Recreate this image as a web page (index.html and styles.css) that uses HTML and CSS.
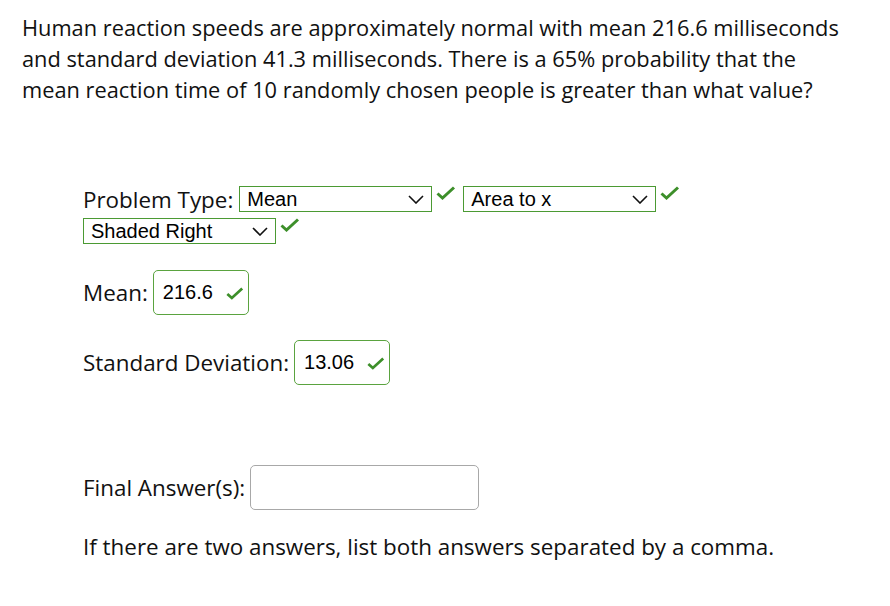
FILE: index.html
```html
<!DOCTYPE html>
<html>
<head>
<meta charset="utf-8">
<link rel="stylesheet" href="styles.css">
</head>
<body>
<div class="page">
  <p class="question">Human reaction speeds are approximately normal with mean 216.6 milliseconds and standard deviation 41.3 milliseconds. There is a 65% probability that the mean reaction time of 10 randomly chosen people is greater than what value?</p>

  <div class="form">
    <div class="row row-type">
      <span class="label">Problem Type:</span>
      <span class="sel sel-wide">
        <select><option>Mean</option></select>
        <svg class="chev" width="16" height="9" viewBox="0 0 16 9"><path d="M1 1 L8 8 L15 1" fill="none" stroke="#111" stroke-width="1.6"/></svg>
      </span>
      <svg class="check" width="20" height="14" viewBox="0 0 20 14"><path d="M1.5 7.5 L6.5 12 L18 1.5" fill="none" stroke="#3d8f2a" stroke-width="3"/></svg>
      <span class="sel sel-wide sel-second">
        <select><option>Area to x</option></select>
        <svg class="chev" width="16" height="9" viewBox="0 0 16 9"><path d="M1 1 L8 8 L15 1" fill="none" stroke="#111" stroke-width="1.6"/></svg>
      </span>
      <svg class="check" width="20" height="14" viewBox="0 0 20 14"><path d="M1.5 7.5 L6.5 12 L18 1.5" fill="none" stroke="#3d8f2a" stroke-width="3"/></svg>
    </div>
    <div class="row row-shade">
      <span class="sel sel-shade">
        <select><option>Shaded Right</option></select>
        <svg class="chev" width="16" height="9" viewBox="0 0 16 9"><path d="M1 1 L8 8 L15 1" fill="none" stroke="#111" stroke-width="1.6"/></svg>
      </span>
      <svg class="check" width="20" height="14" viewBox="0 0 20 14"><path d="M1.5 7.5 L6.5 12 L18 1.5" fill="none" stroke="#3d8f2a" stroke-width="3"/></svg>
    </div>

    <div class="row row-field row-mean">
      <span class="label">Mean:</span>
      <span class="field correct">
        <span class="val">216.6</span>
        <svg class="check-in" width="18" height="13" viewBox="0 0 20 14"><path d="M1.5 7.5 L6.5 12 L18 1.5" fill="none" stroke="#3d8f2a" stroke-width="3"/></svg>
      </span>
    </div>

    <div class="row row-field row-sd">
      <span class="label">Standard Deviation:</span>
      <span class="field correct">
        <span class="val">13.06</span>
        <svg class="check-in" width="18" height="13" viewBox="0 0 20 14"><path d="M1.5 7.5 L6.5 12 L18 1.5" fill="none" stroke="#3d8f2a" stroke-width="3"/></svg>
      </span>
    </div>

    <div class="row row-field row-final">
      <span class="label">Final Answer(s):</span>
      <span class="field blank"></span>
    </div>

    <p class="note">If there are two answers, list both answers separated by a comma.</p>
  </div>
</div>
</body>
</html>
```

FILE: styles.css
```css
html, body {
  margin: 0;
  padding: 0;
  background: #fff;
}
.page {
  padding: 12px 0 0 22px;
  font-family: "Open Sans", "DejaVu Sans", sans-serif;
  font-size: 22.4px;
  color: #111;
}
.question {
  margin: 0;
  width: 825px;
  font-size: 21.8px;
  line-height: 31px;
}
.form {
  margin-left: 61px;
  margin-top: 81px;
}
.row {
  display: flex;
  align-items: center;
}
.row-type,
.row-shade {
  align-items: flex-start;
}
.label {
  line-height: 26px;
}
.row-type .label {
  margin-right: 6px;
  margin-top: 1px;
}
.sel {
  position: relative;
  display: block;
  height: 26px;
}
.sel select {
  display: block;
  -webkit-appearance: none;
  appearance: none;
  box-sizing: border-box;
  height: 26px;
  width: 100%;
  margin: 0;
  padding: 0 0 1px 7px;
  border: 1px solid #4b9a33;
  border-radius: 0;
  background: #fff;
  font-family: "Liberation Sans", Arial, sans-serif;
  font-size: 20px;
  color: #000;
  line-height: 22px;
}
.sel-wide {
  width: 193px;
}
.sel-second {
  margin-left: 7px;
}
.sel-shade {
  width: 193px;
}
.chev {
  position: absolute;
  right: 8px;
  top: 9px;
  pointer-events: none;
}
.check {
  margin-left: 4px;
  margin-top: 0;
}
.row-shade {
  margin-top: 5px;
}
.row-shade .check {
  margin-left: 4px;
}
.field {
  position: relative;
  box-sizing: border-box;
  display: flex;
  align-items: center;
  height: 45px;
  border-radius: 5px;
  background: #fff;
  margin-left: 5px;
}
.field.correct {
  width: 96px;
  border: 1px solid #5aa33f;
  padding-left: 9px;
}
.field.blank {
  width: 229px;
  border: 1px solid #a8a8a8;
}
.val {
  font-family: "Liberation Sans", Arial, sans-serif;
  font-size: 20px;
  color: #000;
}
.check-in {
  position: absolute;
  right: 4px;
  top: 16px;
}
.row-mean {
  margin-top: 26px;
}
.row-sd {
  margin-top: 25px;
}
.row-final {
  margin-top: 80px;
}
.note {
  margin: 22px 0 0 0;
  line-height: 30px;
}
```
